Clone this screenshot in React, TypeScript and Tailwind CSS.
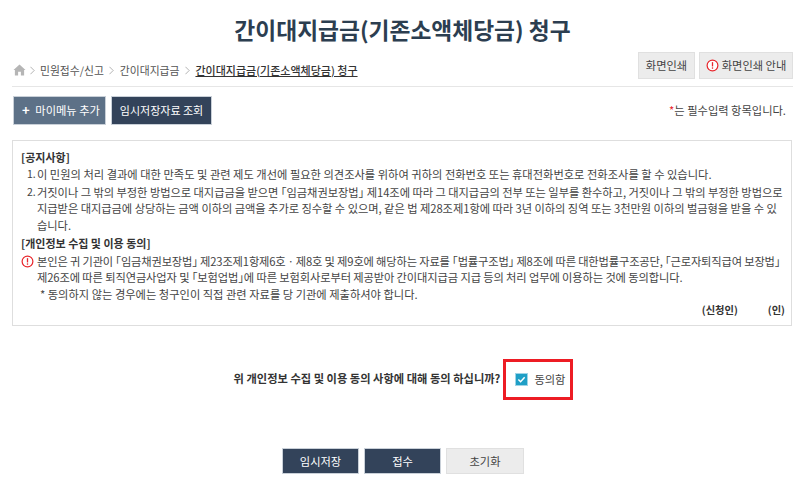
import React from "react";

const FONT = "font-['Noto_Sans_CJK_KR','Noto_Sans',sans-serif]";

function AlertIcon() {
  return (
    <svg viewBox="0 0 14 14" className="w-[13px] h-[13px] shrink-0">
      <circle cx="7" cy="7" r="5.8" fill="#fff" stroke="#e8262c" strokeWidth="1.3" />
      <rect x="6.3" y="3.4" width="1.4" height="4.6" fill="#e8262c" />
      <rect x="6.3" y="9" width="1.4" height="1.5" fill="#e8262c" />
    </svg>
  );
}

function HomeIcon() {
  return (
    <svg viewBox="0 0 14 13" className="w-[13px] h-[12px] shrink-0 -mr-[2px]">
      <path d="M7 0.5 L0.5 6.5 L2 6.5 L2 12.5 L5.5 12.5 L5.5 8.5 L8.5 8.5 L8.5 12.5 L12 12.5 L12 6.5 L13.5 6.5 Z" fill="#b5b5b5" />
    </svg>
  );
}

function Chevron() {
  return (
    <svg viewBox="0 0 6 10" className="w-[5px] h-[9px] shrink-0">
      <path d="M0.5 0.5 L5 5 L0.5 9.5" fill="none" stroke="#999" strokeWidth="0.9" />
    </svg>
  );
}

// 낫표는 반각으로
function Q(props: { children: string }) {
  return <span className="[font-feature-settings:'halt']">{props.children}</span>;
}

function Breadcrumb() {
  return (
    <div className="flex items-center text-[10.8px] text-[#555] gap-[5.5px] mt-[9px] pl-[1px]">
      <HomeIcon />
      <Chevron />
      <span>민원접수/신고</span>
      <Chevron />
      <span>간이대지급금</span>
      <Chevron />
      <span className="underline font-medium text-[#333] text-[11px]">간이대지급금(기존소액체당금) 청구</span>
    </div>
  );
}

function GreyButton(props: { children: React.ReactNode; className?: string }) {
  return (
    <button className={`flex items-center justify-center bg-[#ececec] border border-[#e0e0e0] text-[11.25px] text-[#444] ${props.className ?? ""}`}>
      {props.children}
    </button>
  );
}

export default function App() {
  return (
    <div className={`${FONT} w-[800px] h-[490px] overflow-hidden bg-white text-[#333] pl-[12px] pr-[7px]`}>
      <h1 className="text-center text-[22.75px] leading-[32px] font-bold text-[#2c3e50] pt-[14px]">
        간이대지급금(기존소액체당금) 청구
      </h1>

      <div className="flex justify-between items-center border-b-[1.5px] border-[#e6e6e6] mt-[6px] pb-[7px]">
        <Breadcrumb />
        <div className="flex gap-[4px]">
          <GreyButton className="w-[57px] h-[27px]">화면인쇄</GreyButton>
          <GreyButton className="w-[94px] h-[27px] gap-[3px]">
            <AlertIcon />
            화면인쇄 안내
          </GreyButton>
        </div>
      </div>

      <div className="flex justify-between items-center mt-[9px]">
        <div className="flex gap-[5px] pl-[1px]">
          <button className="h-[29px] w-[93px] pl-[3px] bg-[#5d7187] border border-[#c9d0d8] text-white text-[11.25px]">
            <b className="mr-[3px] text-[13px] leading-[13px]">+</b> 마이메뉴 추가
          </button>
          <button className="h-[29px] w-[101px] bg-[#33435a] border border-[#c9d0d8] text-white text-[11px]">
            임시저장자료 조회
          </button>
        </div>
        <p className="text-[11.25px] text-[#444] pr-[7px]">
          <span className="text-[#e8262c]">*</span>는 필수입력 항목입니다.
        </p>
      </div>

      <div className="mt-[15px] w-[780px] h-[186px] border border-[#dedede] pl-[8px] pr-[6px] pt-[8px] text-[11.25px] leading-[16.5px] text-[#444] whitespace-nowrap">
        <p className="font-bold text-[#333] text-[11px]">[공지사항]</p>
        <div className="flex pl-[6px]">
          <span className="w-[10px] shrink-0 text-[10.5px]">1.</span>
          <p>이 민원의 처리 결과에 대한 만족도 및 관련 제도 개선에 필요한 의견조사를 위하여 귀하의 전화번호 또는 휴대전화번호로 전화조사를 할 수 있습니다.</p>
        </div>
        <div className="flex pl-[6px] mt-[1.5px]">
          <span className="w-[10px] shrink-0 text-[10.5px]">2.</span>
          <p className="tracking-[-0.05px]">
            거짓이나 그 밖의 부정한 방법으로 대지급금을 받으면 <Q>「</Q>임금채권보장법<Q>」</Q> 제14조에 따라 그 대지급금의 전부 또는 일부를 환수하고, 거짓이나 그 밖의 부정한 방법으로
            <br />
            지급받은 대지급금에 상당하는 금액 이하의 금액을 추가로 징수할 수 있으며, 같은 법 제28조제1항에 따라 3년 이하의 징역 또는 3천만원 이하의 벌금형을 받을 수 있
            <br />
            습니다.
          </p>
        </div>
        <p className="font-bold text-[#333] text-[11px] mt-[1.5px]">[개인정보 수집 및 이용 동의]</p>
        <div className="flex items-start gap-[3px] mt-[1.5px]">
          <span className="mt-[2px]"><AlertIcon /></span>
          <div>
            <p className="tracking-[-0.16px]">
              본인은 귀 기관이 <Q>「</Q>임금채권보장법<Q>」</Q> 제23조제1항제6호ㆍ제8호 및 제9호에 해당하는 자료를 <Q>「</Q>법률구조법<Q>」</Q> 제8조에 따른 대한법률구조공단, <Q>「</Q>근로자퇴직급여 보장법<Q>」</Q>
            </p>
            <p className="tracking-[-0.12px]">
              제26조에 따른 퇴직연금사업자 및 <Q>「</Q>보험업법<Q>」</Q>에 따른 보험회사로부터 제공받아 간이대지급금 지급 등의 처리 업무에 이용하는 것에 동의합니다.
            </p>
            <p className="pl-[3px]">* 동의하지 않는 경우에는 청구인이 직접 관련 자료를 당 기관에 제출하셔야 합니다.</p>
          </div>
        </div>
        <div className="flex justify-end gap-[30px] font-bold text-[#333] text-[10.25px]">
          <span>(신청인)</span>
          <span>(인)</span>
        </div>
      </div>

      <div className="flex justify-center items-center mt-[33px] text-[11.25px] pl-[2px]">
        <span className="font-bold text-[#333] mb-[3px]">위 개인정보 수집 및 이용 동의 사항에 대해 동의 하십니까?</span>
        <div className="flex items-center h-[41px] w-[70px] border-[3px] border-[#ed1c24] ml-[3px] pl-[9px] gap-[6px] text-[#444]">
          <span className="flex items-center justify-center w-[13px] h-[13px] bg-[#1f9fc6] border border-[#9fd4e6]">
            <svg viewBox="0 0 10 10" className="w-[9px] h-[9px]">
              <path d="M1.5 5 L4 7.5 L8.5 2.5" fill="none" stroke="#fff" strokeWidth="1.6" />
            </svg>
          </span>
          동의함
        </div>
      </div>

      <div className="flex justify-center gap-[5px] mt-[48px] text-[11.25px] pl-[1px]">
        <button className="w-[77px] h-[26px] bg-[#33435a] border border-[#c9d0d8] text-white">임시저장</button>
        <button className="w-[77px] h-[26px] bg-[#33435a] border border-[#c9d0d8] text-white">접수</button>
        <GreyButton className="w-[78px] h-[26px]">초기화</GreyButton>
      </div>
    </div>
  );
}
